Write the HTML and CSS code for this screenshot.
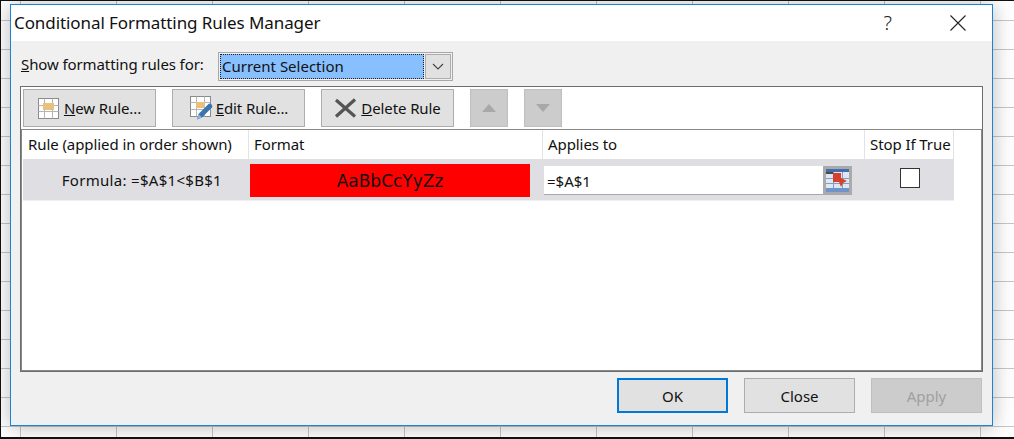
FILE: index.html
```html
<!DOCTYPE html>
<html lang="en">
<head>
<meta charset="utf-8">
<title>Conditional Formatting Rules Manager</title>
<link rel="stylesheet" href="styles.css">
</head>
<body>
<div class="sheet">
  <div class="dialog">
    <header class="titlebar">
      <h1 class="title">Conditional Formatting Rules Manager</h1>
      <span class="help">?</span>
      <svg class="close-x" width="16" height="16" viewBox="0 0 16 16"><path d="M0.5 0.5L15.5 15.5M15.5 0.5L0.5 15.5" stroke="#222" stroke-width="1.1" fill="none"/></svg>
    </header>
    <div class="body">
      <div class="scope">
        <label class="scope-label"><u>S</u>how formatting rules for:</label>
        <div class="combo">
          <div class="combo-value"><span class="combo-focus">Current Selection</span></div>
          <div class="combo-btn">
            <svg width="12" height="7" viewBox="0 0 12 7"><path d="M1 1L6 6L11 1" stroke="#444" stroke-width="1.1" fill="none"/></svg>
          </div>
        </div>
      </div>
      <div class="panel">
        <div class="toolbar">
          <button class="btn tool"><svg width="21" height="21" viewBox="0 0 21 21"><rect x="0.5" y="0.5" width="20" height="20" fill="#fff" stroke="#8a8a8a"/><path d="M0.5 7.5H20.5M0.5 13.5H20.5M6.5 0.5V20.5M14.5 0.5V20.5" stroke="#b5b5b5" fill="none"/><rect x="5" y="5" width="11" height="7" fill="#e8c27c"/></svg><span><u>N</u>ew Rule...</span></button>
          <button class="btn tool edit"><svg width="23" height="24" viewBox="0 0 23 24"><rect x="0.5" y="0.5" width="20" height="20" fill="#fff" stroke="#8a8a8a"/><path d="M0.5 6.5H20.5M0.5 13.5H20.5M6.5 0.5V20.5M14.5 0.5V20.5" stroke="#b5b5b5" fill="none"/><rect x="6" y="6" width="9" height="6" fill="#e8c27c"/><path d="M7 23.5L8.5 18L18.5 8Q20 7 21.5 8.5Q23 10 22 11.5L12 21.5Z" fill="#3d74b0"/><path d="M7 23.5L8.5 18L12 21.5Z" fill="#8fb4d8"/></svg><span><u>E</u>dit Rule...</span></button>
          <button class="btn tool del"><svg width="23" height="20" viewBox="0 0 23 20"><path d="M2 2L21 18.5M21 1.5L2 18.5" stroke="#555" stroke-width="3.2" fill="none"/></svg><span><u>D</u>elete Rule</span></button>
          <button class="btn move" disabled><svg width="14" height="8" viewBox="0 0 14 8"><path d="M7 0L14 8H0Z" fill="#a8a8a8"/></svg></button>
          <button class="btn move" disabled><svg width="14" height="8" viewBox="0 0 14 8"><path d="M0 0H14L7 8Z" fill="#a8a8a8"/></svg></button>
        </div>
        <div class="list">
          <div class="cols head">
            <div class="hcell">Rule (applied in order shown)</div>
            <div class="hcell">Format</div>
            <div class="hcell">Applies to</div>
            <div class="hcell">Stop If True</div>
          </div>
          <div class="cols row">
            <div class="formula">Formula: =$A$1&lt;$B$1</div>
            <div class="preview-cell"><div class="preview">AaBbCcYyZz</div></div>
            <div class="applies">
              <div class="applies-input">=$A$1</div>
              <div class="ref-btn">
                <svg width="23" height="23" viewBox="0 0 23 23"><rect width="23" height="23" fill="#dfe7f2"/><rect y="0" width="23" height="3" fill="#3f6fb0"/><rect x="0" y="3" width="7" height="2" fill="#4a4a4a"/><path d="M0 9.5H23M0 14.5H23M7.5 3V23M16.5 3V23" stroke="#7f9cc4" fill="none"/><rect y="19" width="23" height="4" fill="#6f94c8"/><path d="M7 4H15V9L21 12L17 14L15 18L13 13H7Z" fill="#d8402c"/></svg>
              </div>
            </div>
            <div class="stop"><span class="check"></span></div>
          </div>
        </div>
      </div>
      <footer class="footer">
        <button class="btn action primary">OK</button>
        <button class="btn action">Close</button>
        <button class="btn action" disabled>Apply</button>
      </footer>
    </div>
  </div>
</div>
</body>
</html>
```
FILE: styles.css
```css
* { box-sizing: border-box; }
html, body { margin: 0; padding: 0; }
body {
  width: 1014px;
  height: 439px;
  overflow: hidden;
  font-family: "Noto Sans", "Open Sans", sans-serif;
  font-size: 15px;
  color: #111;
}
.sheet {
  position: relative;
  width: 1014px;
  height: 439px;
  background-color: #fff;
  background-image:
    linear-gradient(90deg, transparent 95px, #c6c6c6 95px),
    linear-gradient(180deg, transparent 28px, #c6c6c6 28px);
  background-size: 96px 100%, 100% 29px;
  background-position: -76px 0, 0 -9px;
  border-left: 1px solid #111;
  border-top: 1px solid #111;
  border-bottom: 2px solid #111;
}
.dialog {
  position: absolute;
  left: 9px;
  top: 3px;
  width: 983px;
  height: 422px;
  border: 1px solid #1883d7;
  background: #f0f0f0;
  box-shadow: 0 1px 20px rgba(0, 0, 0, 0.28);
  display: flex;
  flex-direction: column;
}
.titlebar {
  height: 36px;
  flex: none;
  background: #fff;
  display: flex;
  align-items: center;
  padding: 0 26px 0 3px;
}
.title {
  margin: -2px 0 0;
  font-size: 17px;
  font-weight: 400;
  letter-spacing: -0.08px;
  flex: 1;
}
.help { font-size: 20px; font-weight: 300; margin: -2px 58px 0 0; color: #222; }
.body { flex: 1; display: flex; flex-direction: column; }
.scope {
  display: flex;
  align-items: center;
  height: 29px;
  margin-top: 11px;
  padding-left: 10px;
}
.scope-label { width: 197px; flex: none; letter-spacing: -0.1px; position: relative; top: -3px; }
.combo {
  display: flex;
  align-items: center;
  width: 235px;
  height: 29px;
  border: 1px solid #a8a8a8;
  background: #f0f0f0;
  padding: 1px;
  gap: 1px;
}
.combo-value { flex: 1; height: 25px; background: #88bfff; display: flex; }
.combo-focus {
  flex: 1;
  border: 1px dotted #222;
  padding-left: 1px;
  line-height: 23px;
}
.combo-btn {
  width: 26px;
  height: 25px;
  flex: none;
  background: #e1e1e1;
  border: 1px solid #adadad;
  display: flex;
  align-items: center;
  justify-content: center;
}
.panel {
  margin: 5px 0 0 9px;
  width: 963px;
  height: 286px;
  border: 1px solid #6d6d6d;
  background: #fff;
  display: flex;
  flex-direction: column;
}
.toolbar {
  height: 42px;
  flex: none;
  display: flex;
  align-items: center;
  gap: 16px;
  padding-left: 2px;
}
.btn {
  font: inherit;
  color: inherit;
  background: #e1e1e1;
  border: 1px solid #adadad;
  padding: 0;
  display: flex;
  align-items: center;
  justify-content: center;
}
.btn:disabled { background: #ccc; border-color: #bfbfbf; color: #a0a0a0; }
.tool { width: 133px; height: 38px; gap: 5px; letter-spacing: -0.1px; }
.edit { gap: 3px; padding-left: 1px; }
.del { gap: 4px; }
.move { width: 38px; height: 38px; }
.list {
  flex: 1;
  border: 1px solid #888;
  padding-left: 1px;
}
.cols {
  display: grid;
  grid-template-columns: 226px 294px 322px 89px;
  width: 931px;
}
.head { height: 29px; }
.hcell {
  border-right: 1px solid #e3e3e3;
  padding: 0 0 0 5px;
  line-height: 28px;
  white-space: nowrap;
  letter-spacing: -0.08px;
}
.row {
  height: 42px;
  background: #dfdfe3;
  border-bottom: 1px solid #efeff1;
}
.formula { text-align: right; padding-right: 27px; line-height: 42px; letter-spacing: 0.3px; }
.preview-cell { padding: 5px 13px 3px 1px; }
.preview {
  height: 33px;
  background: #f00;
  color: #111;
  text-align: center;
  font-family: "DejaVu Sans", sans-serif;
  font-size: 17px;
  line-height: 35px;
}
.applies { display: flex; padding: 7px 0 0 1px; }
.applies-input {
  width: 279px;
  height: 29px;
  background: #fff;
  border-bottom: 1px solid #a8a8a8;
  padding-left: 3px;
  line-height: 30px;
}
.ref-btn {
  width: 29px;
  height: 29px;
  border: 3px solid #aaa;
  background: #ddd;
  display: flex;
  align-items: center;
  justify-content: center;
  overflow: hidden;
}
.stop { display: flex; justify-content: center; padding-top: 9px; }
.check {
  width: 20px;
  height: 20px;
  background: #fff;
  border: 1px solid #333;
}
.footer {
  display: flex;
  justify-content: flex-end;
  gap: 16px;
  margin-top: 6px;
  padding-right: 10px;
}
.action { width: 111px; height: 35px; }
.primary { border: 2px solid #0078d7; }
```
